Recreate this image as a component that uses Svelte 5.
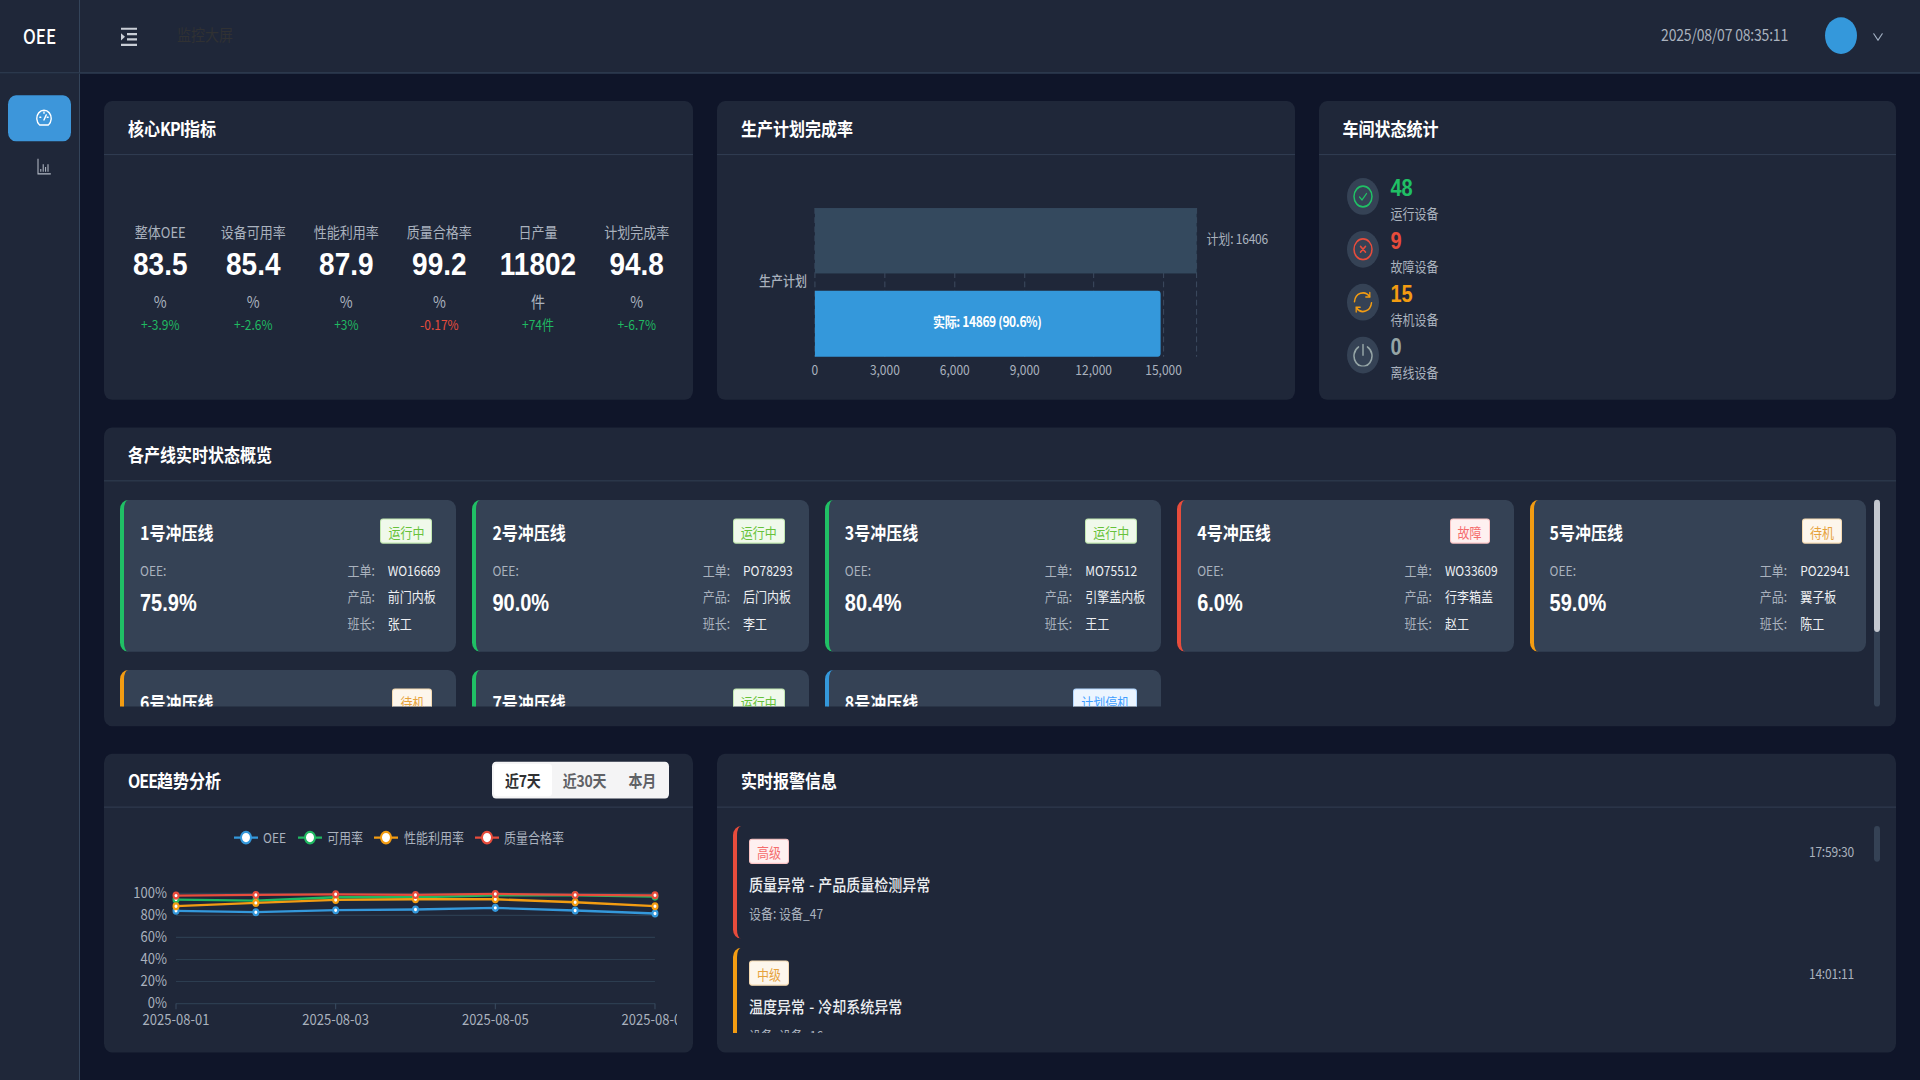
<script>
  const kpis = [
    { label: '整体OEE', value: '83.5', unit: '%', change: '+-3.9%', up: true },
    { label: '设备可用率', value: '85.4', unit: '%', change: '+-2.6%', up: true },
    { label: '性能利用率', value: '87.9', unit: '%', change: '+3%', up: true },
    { label: '质量合格率', value: '99.2', unit: '%', change: '-0.17%', up: false },
    { label: '日产量', value: '11802', unit: '件', change: '+74件', up: true },
    { label: '计划完成率', value: '94.8', unit: '%', change: '+-6.7%', up: true }
  ];
  const stats = [
    { kind: 'run', value: 48, label: '运行设备' },
    { kind: 'fault', value: 9, label: '故障设备' },
    { kind: 'idle', value: 15, label: '待机设备' },
    { kind: 'off', value: 0, label: '离线设备' }
  ];
  const lines = [
    { name: '1号冲压线', kind: 'run', tag: '运行中', oee: '75.9%', wo: 'WO16669', product: '前门内板', lead: '张工' },
    { name: '2号冲压线', kind: 'run', tag: '运行中', oee: '90.0%', wo: 'PO78293', product: '后门内板', lead: '李工' },
    { name: '3号冲压线', kind: 'run', tag: '运行中', oee: '80.4%', wo: 'MO75512', product: '引擎盖内板', lead: '王工' },
    { name: '4号冲压线', kind: 'fault', tag: '故障', oee: '6.0%', wo: 'WO33609', product: '行李箱盖', lead: '赵工' },
    { name: '5号冲压线', kind: 'idle', tag: '待机', oee: '59.0%', wo: 'PO22941', product: '翼子板', lead: '陈工' },
    { name: '6号冲压线', kind: 'idle', tag: '待机', oee: '62.3%', wo: 'WO20418', product: '车门外板', lead: '刘工' },
    { name: '7号冲压线', kind: 'run', tag: '运行中', oee: '86.1%', wo: 'MO51207', product: '侧围外板', lead: '周工' },
    { name: '8号冲压线', kind: 'plan', tag: '计划停机', oee: '0.0%', wo: 'PO10376', product: '顶盖', lead: '吴工' }
  ];
  const alarms = [
    { level: '高级', kind: 'fault', title: '质量异常 - 产品质量检测异常', device: '设备: 设备_47', time: '17:59:30' },
    { level: '中级', kind: 'idle', title: '温度异常 - 冷却系统异常', device: '设备: 设备_16', time: '14:01:11' },
    { level: '中级', kind: 'idle', title: '压力异常 - 液压系统压力波动', device: '设备: 设备_23', time: '11:26:48' }
  ];

  const barTicks = [
    { x: 98, label: '0' }, { x: 168, label: '3,000' }, { x: 238, label: '6,000' },
    { x: 308, label: '9,000' }, { x: 377, label: '12,000' }, { x: 447, label: '15,000' }
  ];

  const X0 = 56, XSTEP = 79.83, Y0 = 170.5, YSPAN = 96;
  const px = (i) => X0 + i * XSTEP;
  const py = (v) => Y0 - (v / 100) * YSPAN;
  const series = [
    { name: 'OEE', color: '#3498db', lx: 114, tx: 143, data: [84.1, 82.9, 84.7, 85.3, 86.8, 84.4, 81.7] },
    { name: '可用率', color: '#20b962', lx: 178, tx: 207, data: [94.3, 93.4, 96.4, 96.4, 98.2, 98.2, 97] },
    { name: '性能利用率', color: '#f39c12', lx: 254, tx: 284, data: [88.3, 91.3, 94, 94.6, 94.6, 91.9, 88.3] },
    { name: '质量合格率', color: '#e74c3c', lx: 355, tx: 384, data: [97.9, 98.5, 99.1, 98.5, 99.4, 98.5, 98.2] }
  ];
  const pts = (d) => d.map((v, i) => `${px(i)},${py(v)}`).join(' ');
  const yTicks = [0, 20, 40, 60, 80, 100];
  const xTicks = [
    { i: 0, label: '2025-08-01' }, { i: 2, label: '2025-08-03' },
    { i: 4, label: '2025-08-05' }, { i: 6, label: '2025-08-07' }
  ];
</script>

<div class="stage">
  <header class="topbar">
    <div class="logo">OEE</div>
    <div class="top-main">
      <svg class="toggle" viewBox="128 128 768 768" fill="#c9ced6" aria-hidden="true">
        <path d="M128 128h768v96H128zM416 352h480v96H416zM416 576h480v96H416zM128 800h768v96H128zM128 360l192 152-192 152z" />
      </svg>
      <span class="crumb">监控大屏</span>
      <span class="clock">2025/08/07 08:35:11</span>
      <span class="avatar"></span>
      <svg class="chevron" viewBox="0 0 12 12" fill="none" stroke="#a0aec0" stroke-width="1" aria-hidden="true">
        <path d="M1.500 3 6 9l4.500-6" />
      </svg>
    </div>
  </header>

  <div class="body">
    <nav class="side">
      <a class="nav-item active" href="#dash" aria-label="监控大屏">
        <svg viewBox="0 0 20 20" fill="none" stroke="#fff" stroke-width="1.700" aria-hidden="true">
          <path d="M4.500 18.500a9 9 0 1 1 11 0z" stroke-linejoin="round" />
          <path d="M10 13 12.800 7.500M4.800 10h1.200M14 10h1.200M10 4.500v1.200" stroke-linecap="round" />
        </svg>
      </a>
      <a class="nav-item" href="#bars" aria-label="统计">
        <svg viewBox="0 0 20 20" fill="none" stroke="#b4bbc6" stroke-width="1.300" aria-hidden="true">
          <path d="M2.500 1.500v16.500h16M6 15.500v-3M9 15.500v-8M12 15.500v-5M15 15.500v-8" />
        </svg>
      </a>
    </nav>

    <main class="main">
      <section class="card">
        <h2 class="card-head"><span>核心<span class="lat">KPI</span>指标</span></h2>
        <div class="kpis">
          {#each kpis as k}
            <div class="kpi">
              <div class="kpi-label">{k.label}</div>
              <div class="kpi-value">{k.value}</div>
              <div class="kpi-unit">{k.unit}</div>
              <div class="kpi-change" class:down={!k.up}>{k.change}</div>
            </div>
          {/each}
        </div>
      </section>

      <section class="card">
        <h2 class="card-head">生产计划完成率</h2>
        <svg class="chart" viewBox="0 0 578 213" aria-label="生产计划完成率图表">
          {#each [...barTicks.map((t) => t.x), 480] as x}
            <line x1={x} x2={x} y1="46" y2="175.500" stroke="#3d4b60" stroke-dasharray="5 3" />
          {/each}
          <rect x="98" y="46" width="382" height="57" fill="#34495e" />
          <path d="M98 118h343a3 3 0 0 1 3 3v51.500a3 3 0 0 1-3 3H98z" fill="#3498db" />
          <text x="90" y="109" text-anchor="end" class="ax strong">生产计划</text>
          <text x="490" y="72" class="ax tight">计划: 16406</text>
          <text x="270.500" y="144.500" text-anchor="middle" class="bar-label">实际: 14869 (90.6%)</text>
          {#each barTicks as t}
            <text x={t.x} y="186" text-anchor="middle" class="ax">{t.label}</text>
          {/each}
        </svg>
      </section>

      <section class="card">
        <h2 class="card-head">车间状态统计</h2>
        <div class="stats">
          {#each stats as s}
            <div class="stat {s.kind}">
              <span class="stat-icon">
                <svg viewBox="0 0 20 20" fill="none" stroke="currentColor" stroke-width="1.500" stroke-linecap="round" aria-hidden="true">
                  {#if s.kind === 'run'}
                    <circle cx="10" cy="10" r="9" />
                    <path d="M6.500 10.500 9 13l4.500-5.500" stroke-width="1.200" />
                  {:else if s.kind === 'fault'}
                    <circle cx="10" cy="10" r="9" />
                    <path d="M7.500 7.500l5 5M12.500 7.500l-5 5" />
                  {:else if s.kind === 'idle'}
                    <path d="M1.500 9.500a8.500 8.500 0 0 1 15-4.500" />
                    <path d="M18.500 10.500a8.500 8.500 0 0 1-15 4.500" />
                    <path d="M16.800 1.500v4h-4M3.200 18.500v-4h4" stroke-width="1.300" />
                  {:else}
                    <path d="M5.500 3A9 9 0 1 0 14.500 3" />
                    <path d="M10 1v9" />
                  {/if}
                </svg>
              </span>
              <div class="stat-text">
                <div class="stat-value">{s.value}</div>
                <div class="stat-label">{s.label}</div>
              </div>
            </div>
          {/each}
        </div>
      </section>

      <section class="card span3">
        <h2 class="card-head">各产线实时状态概览</h2>
        <div class="scroll-wrap">
          <div class="lines">
            {#each lines as l}
              <article class="line {l.kind}">
                <div class="line-head">
                  <h3>{l.name}</h3>
                  <span class="tag {l.kind}">{l.tag}</span>
                </div>
                <div class="line-body">
                  <div class="oee">
                    <div class="oee-label">OEE:</div>
                    <div class="oee-value">{l.oee}</div>
                  </div>
                  <dl class="meta">
                    <dt>工单:</dt><dd>{l.wo}</dd>
                    <dt>产品:</dt><dd>{l.product}</dd>
                    <dt>班长:</dt><dd>{l.lead}</dd>
                  </dl>
                </div>
              </article>
            {/each}
          </div>
          <div class="bar-track"><div class="bar-thumb"></div></div>
        </div>
      </section>

      <section class="card">
        <div class="card-head with-tools">
          <h2><span class="lat">OEE</span>趋势分析</h2>
          <div class="seg">
            <button class="on">近7天</button>
            <button>近30天</button>
            <button>本月</button>
          </div>
        </div>
        <svg class="chart trend" viewBox="0 0 557 213" aria-label="OEE趋势图表">
          {#each series as s}
            <line x1={s.lx} x2={s.lx + 24} y1="26" y2="26" stroke={s.color} stroke-width="2" />
            <circle cx={s.lx + 12} cy="26" r="5" fill="#fff" stroke={s.color} stroke-width="2" />
            <text x={s.tx} y="25.500" class="ax">{s.name}</text>
          {/each}
          {#each yTicks as t}
            <line x1={X0} x2={px(6)} y1={py(t)} y2={py(t)} stroke="#2c3d50" />
            <text x="47" y={py(t) - 1.500} text-anchor="end" class="ax big">{t}%</text>
          {/each}
          {#each xTicks as t}
            <line x1={px(t.i)} x2={px(t.i)} y1={Y0} y2={Y0 + 5} stroke="#3a4b60" />
            <text x={px(t.i)} y="183.500" text-anchor="middle" class="ax big">{t.label}</text>
          {/each}
          {#each series as s}
            <polyline points={pts(s.data)} fill="none" stroke={s.color} stroke-width="2" />
            {#each s.data as v, i}
              <circle cx={px(i)} cy={py(v)} r="2.500" fill="#fff" stroke={s.color} stroke-width="2" />
            {/each}
          {/each}
        </svg>
      </section>

      <section class="card span2">
        <h2 class="card-head">实时报警信息</h2>
        <div class="scroll-wrap">
          <div class="alarms">
            {#each alarms as a}
              <article class="alarm {a.kind}">
                <div class="alarm-main">
                  <span class="tag {a.kind}">{a.level}</span>
                  <div class="alarm-title">{a.title}</div>
                  <div class="alarm-device">{a.device}</div>
                </div>
                <time>{a.time}</time>
              </article>
            {/each}
          </div>
          <div class="bar-thumb small"></div>
        </div>
      </section>
    </main>
  </div>
</div>

<style>
  :global(html) {
    overflow: hidden;
    background: #0f1529;
  }
  :global(body) {
    margin: 0;
    height: 1080px;
    background: #0f1529;
  }

  .stage {
    width: 1920px;
    height: 940px;
    transform: scaleY(1.14894);
    transform-origin: 0 0;
    display: flex;
    flex-direction: column;
    background: #0f1529;
    color: #fff;
    font-family: "Noto Sans CJK SC", "Noto Sans", sans-serif;
    font-size: 14px;
  }

  .topbar {
    height: 64px;
    flex: none;
    display: flex;
    box-sizing: border-box;
    background: #1f2739;
    border-bottom: 1px solid #34445a;
  }
  .logo {
    width: 80px;
    box-sizing: border-box;
    border-right: 1px solid #34445a;
    display: flex;
    align-items: center;
    justify-content: center;
    padding-bottom: 3px;
    font-size: 17px;
    font-weight: 500;
  }
  .top-main {
    flex: 1;
    display: flex;
    align-items: center;
    padding: 0 36px 0 41px;
  }
  .toggle { width: 16px; height: 16px; }
  .crumb { margin-left: 40px; margin-bottom: 3px; color: #303133; }
  .clock { margin-left: auto; margin-bottom: 3px; color: #aab2be; letter-spacing: -0.2px; }
  .avatar {
    width: 32px;
    height: 32px;
    border-radius: 50%;
    background: #3498db;
    margin-left: 37px;
    margin-bottom: 0.5px;
  }
  .chevron { width: 12px; height: 12px; margin-left: 15px; }

  .body { flex: 1; display: flex; min-height: 0; }
  .side {
    width: 80px;
    box-sizing: border-box;
    flex: none;
    padding: 19px 8px 0;
    background: #1f2739;
    border-right: 1px solid #34445a;
    display: flex;
    flex-direction: column;
    gap: 3px;
  }
  .nav-item {
    height: 40px;
    border-radius: 8px;
    display: flex;
    align-items: center;
    padding-left: 28px;
  }
  .nav-item.active { background: #3d96da; }
  .nav-item svg { width: 16px; height: 16px; margin-bottom: 2px; }

  .main {
    flex: 1;
    padding: 24px;
    display: grid;
    grid-template-columns: 589px 1fr 1fr;
    grid-template-rows: repeat(3, 260px);
    gap: 24px;
  }
  .span3 { grid-column: span 3; }
  .span2 { grid-column: span 2; }
  .card {
    background: #1f2739;
    border-radius: 8px;
    display: flex;
    flex-direction: column;
    min-width: 0;
    overflow: hidden;
  }
  .card-head {
    height: 47px;
    flex: none;
    box-sizing: border-box;
    margin: 0;
    padding: 0 24px 1px;
    display: flex;
    align-items: center;
    border-bottom: 1px solid #2f3b50;
    font-size: 16px;
    font-weight: 700;
  }
  .card-head h2 { margin: 0; font-size: 16px; font-weight: 700; }
  .lat { letter-spacing: -1px; }
  .with-tools { justify-content: space-between; }

  .kpis {
    flex: 1;
    display: flex;
    align-items: center;
    justify-content: center;
    gap: 28px;
  }
  .kpi { min-width: 65px; text-align: center; }
  .kpi-label { font-size: 13px; line-height: 20px; margin-top: -2px; color: #aab2be; }
  .kpi-value {
    font-family: "Liberation Sans", sans-serif;
    font-size: 28px;
    font-weight: 700;
    line-height: 36px;
  }
  .kpi-unit { font-size: 14px; line-height: 20px; margin-top: 4px; color: #aab2be; }
  .kpi-change { font-size: 12px; line-height: 16px; margin-top: 2px; color: #20b962; }
  .kpi-change.down { color: #e74c3c; }

  .chart { flex: 1; display: block; width: 100%; min-height: 0; }
  .ax {
    font-size: 12px;
    fill: #aab2be;
    dominant-baseline: central;
  }
  .ax.strong { font-weight: 500; }
  .ax.tight { letter-spacing: -0.2px; }
  .ax.big { font-size: 13px; }
  .bar-label {
    font-size: 12px;
    font-weight: 700;
    fill: #fff;
    letter-spacing: -0.35px;
    dominant-baseline: central;
  }
  .trend { margin-left: 16px; width: 557px; flex: none; height: 213px; }

  .stats { padding: 13px 0 0 28px; }
  .stat { height: 46px; display: flex; align-items: center; gap: 12px; }
  .stat-icon {
    width: 32px;
    height: 32px;
    border-radius: 50%;
    background: #354255;
    display: flex;
    align-items: center;
    justify-content: center;
  }
  .stat-icon svg { width: 20px; height: 20px; }
  .stat-value {
    font-family: "Liberation Sans", sans-serif;
    font-size: 20px;
    font-weight: 700;
    line-height: 28px;
    padding-top: 1px;
  }
  .stat-label { font-size: 12px; line-height: 17px; margin-top: -1px; color: #aab2be; }
  .stat.run .stat-icon, .stat.run .stat-value { color: #20c065; }
  .stat.fault .stat-icon, .stat.fault .stat-value { color: #e74c3c; }
  .stat.idle .stat-icon, .stat.idle .stat-value { color: #f39c12; }
  .stat.off .stat-icon, .stat.off .stat-value { color: #95a5a6; }

  .scroll-wrap {
    position: relative;
    height: 180px;
    margin: 16px;
  }
  .lines {
    height: 100%;
    overflow-y: auto;
    scrollbar-width: none;
    padding-right: 14px;
    display: grid;
    grid-template-columns: repeat(5, 1fr);
    grid-auto-rows: 132px;
    gap: 16px;
  }
  .line {
    background: #354255;
    border-radius: 8px;
    border-left: 4px solid;
    padding: 16px 16px 0;
    min-width: 0;
  }
  .line.run { border-left-color: #20c065; }
  .line.fault { border-left-color: #e74c3c; }
  .line.idle { border-left-color: #f39c12; }
  .line.plan { border-left-color: #3498db; }
  .line-head {
    display: flex;
    align-items: flex-start;
    justify-content: space-between;
    height: 24px;
    padding-right: 8px;
  }
  .line-head h3 { margin: 0; font-size: 16px; line-height: 24px; font-weight: 700; }
  .line-body {
    display: flex;
    justify-content: space-between;
    margin-top: 8.500px;
  }
  .oee-label { font-size: 12px; line-height: 23px; color: #aab2be; }
  .oee-value {
    font-family: "Liberation Sans", sans-serif;
    font-size: 20px;
    font-weight: 700;
    line-height: 28px;
    margin-top: 4px;
  }
  .meta {
    margin: 0;
    display: grid;
    grid-template-columns: auto auto;
    grid-auto-rows: 23px;
    column-gap: 13px;
    font-size: 12px;
    line-height: 23px;
  }
  .meta dt { color: #aab2be; }
  .meta dd { margin: 0; color: #eef0f3; }

  .tag {
    display: inline-flex;
    align-items: center;
    box-sizing: border-box;
    height: 22px;
    padding: 0 7px;
    border: 1px solid;
    border-radius: 3px;
    font-size: 12px;
    white-space: nowrap;
  }
  .tag.run { background: #f0f9eb; border-color: #c2e7b0; color: #67c23a; }
  .tag.idle { background: #fdf6ec; border-color: #f5dab1; color: #e6a23c; }
  .tag.fault { background: #fef0f0; border-color: #fbc4c4; color: #f56c6c; }
  .tag.plan { background: #ecf5ff; border-color: #b3d8ff; color: #409eff; }

  .bar-track {
    position: absolute;
    top: 0;
    right: 0;
    width: 6px;
    height: 100%;
    border-radius: 3px;
    background: #354255;
  }
  .bar-thumb {
    width: 6px;
    height: 64%;
    border-radius: 3px;
    background: #c3c7cf;
  }
  .bar-thumb.small {
    position: absolute;
    top: 0;
    right: 0;
    height: 31px;
    background: #354255;
  }

  .seg {
    display: flex;
    padding: 2px;
    background: #f4f4f5;
    border-radius: 4px;
  }
  .seg button {
    height: 28px;
    padding: 0 11px;
    border: 0;
    border-radius: 3px;
    background: transparent;
    color: #606266;
    font: inherit;
    font-size: 14px;
    letter-spacing: -0.2px;
  }
  .seg button.on { background: #fff; color: #303133; }

  .alarms {
    height: 100%;
    overflow-y: auto;
    scrollbar-width: none;
    display: flex;
    flex-direction: column;
    gap: 8px;
  }
  .alarm {
    flex: none;
    height: 98px;
    box-sizing: border-box;
    padding: 11px 26px 0 12px;
    border-left: 4px solid;
    border-radius: 8px;
    display: flex;
    justify-content: space-between;
  }
  .alarm.fault { border-left-color: #e74c3c; }
  .alarm.idle { border-left-color: #f39c12; }
  .alarm-main { display: flex; flex-direction: column; align-items: flex-start; }
  .alarm-title { margin-top: 7px; font-size: 14px; line-height: 22px; font-weight: 500; color: #eceef1; word-spacing: 1px; }
  .alarm-device { margin-top: 4px; font-size: 12px; line-height: 20px; color: #aab2be; }
  time { font-size: 12px; line-height: 22px; color: #aab2be; letter-spacing: -0.2px; }
</style>
